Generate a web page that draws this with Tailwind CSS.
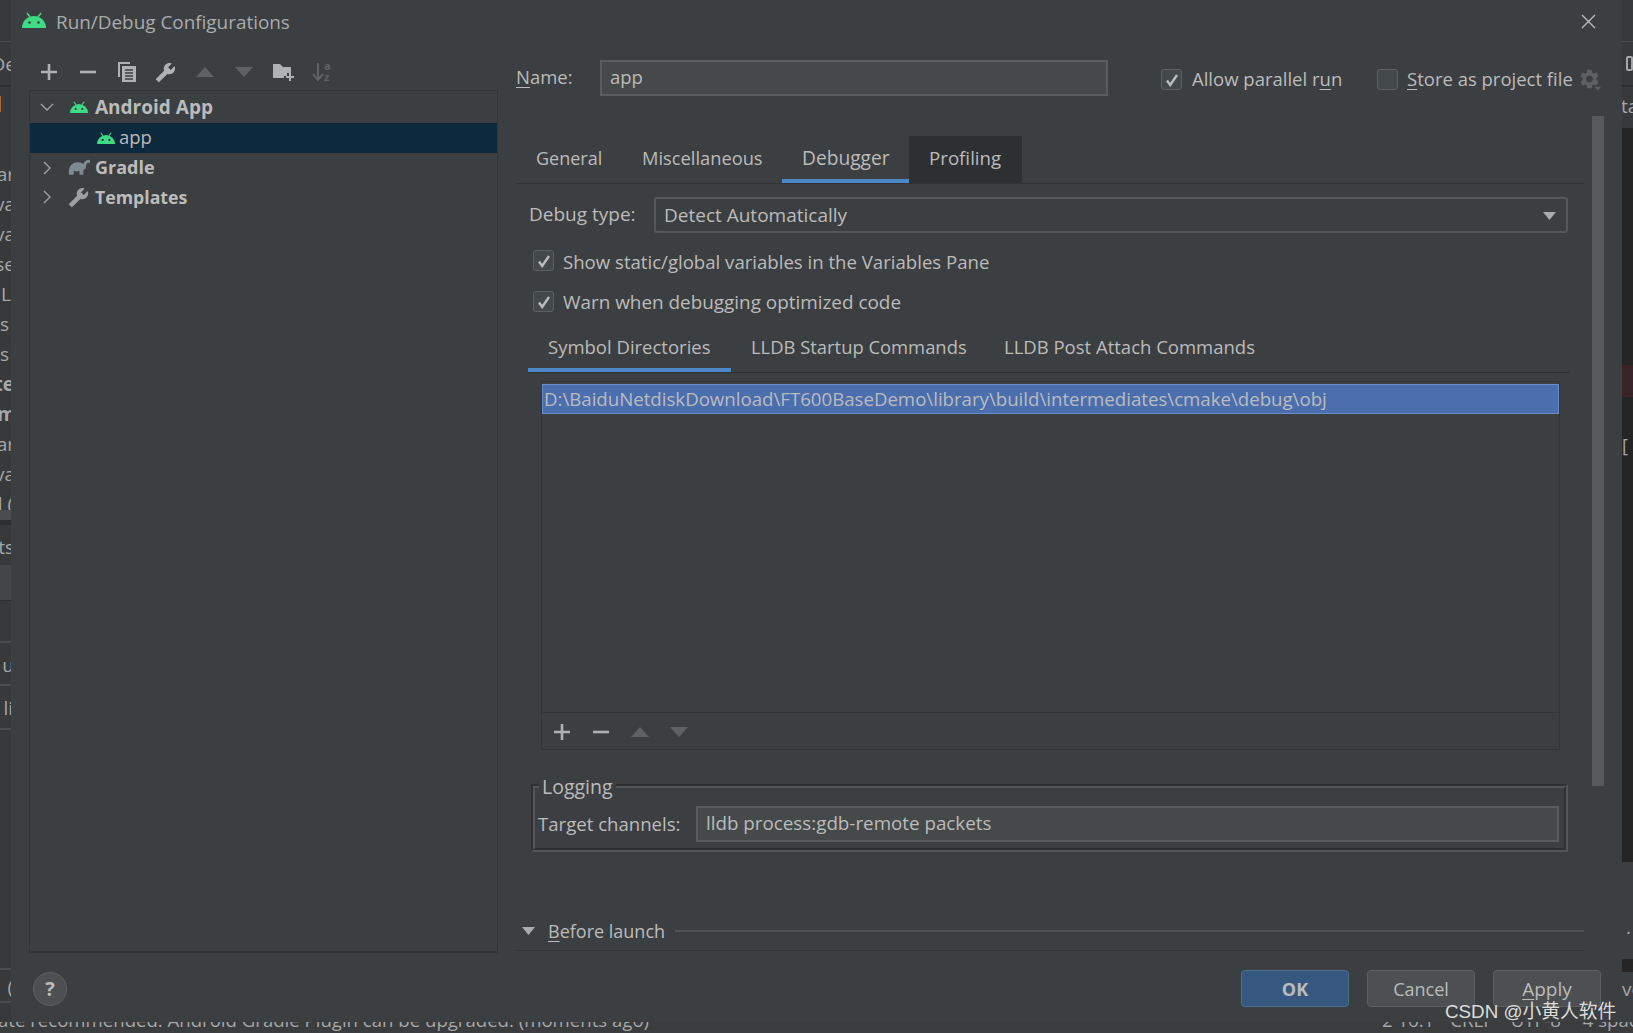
<!DOCTYPE html>
<html lang="en">
<head>
    <meta charset="UTF-8">
    <title>Run/Debug Configurations</title>
    <script src="https://cdn.jsdelivr.net/npm/@tailwindcss/browser@4"></script>
</head>
<body class="relative w-[1633px] h-[1033px] overflow-hidden bg-[#3a3c3e] text-[#bbbbbb] text-[18.5px] font-['Open_Sans',sans-serif]">

<!-- IDE behind the dialog -->
<div class="flex h-[1022px]">
    <div class="w-[11px] overflow-hidden bg-[#37393b] text-[#a5a7a9] flex flex-col items-end leading-[30px] text-[19px] whitespace-nowrap">
        <div class="h-[42px] w-full shrink-0 border-b border-[#4a4c4e]"></div>
        <div class="h-[45px] w-full shrink-0 flex justify-end items-center border-b-2 border-[#2c2e30]"><span class="-mr-[5px]">De</span></div>
        <div class="h-[26px] w-full shrink-0 pt-[9px]"><div class="w-[1px] h-[16px] bg-[#a66a30]"></div></div>
        <div class="h-[46px] shrink-0"></div>
        <div class="h-[30px] shrink-0 -mr-[4px]">ar</div>
        <div class="h-[30px] shrink-0 -mr-[4px]">va</div>
        <div class="h-[30px] shrink-0 -mr-[4px]">va</div>
        <div class="h-[30px] shrink-0 -mr-[4px]">se</div>
        <div class="h-[30px] shrink-0">iL</div>
        <div class="h-[30px] shrink-0 w-full">s</div>
        <div class="h-[30px] shrink-0 w-full">s</div>
        <div class="h-[30px] shrink-0 font-bold -mr-[3px]">te</div>
        <div class="h-[30px] shrink-0 font-bold -mr-[5px]">m</div>
        <div class="h-[30px] shrink-0 -mr-[4px]">ar</div>
        <div class="h-[30px] shrink-0 -mr-[4px]">va</div>
        <div class="h-[21px] shrink-0 -mr-[2px]">l (</div>
        <div class="h-[10px] w-full shrink-0 bg-[#4a4c4e]"></div>
        <div class="h-[5px] w-full shrink-0 bg-[#2c2e30]"></div>
        <div class="h-[40px] shrink-0 leading-[44px] -mr-[3px]">ts</div>
        <div class="h-[36px] w-full shrink-0 bg-[#434547] border-b border-[#2c2e30]"></div>
        <div class="h-[42px] w-full shrink-0 border-b-2 border-[#4a4c4e]"></div>
        <div class="h-[43px] leading-[44px] w-full shrink-0 border-b-2 border-[#4a4c4e] flex justify-end"><span class="-mr-[3px]">u</span></div>
        <div class="h-[44px] leading-[44px] w-full shrink-0 border-b-2 border-[#4a4c4e] flex justify-end"><span class="-mr-[2px]">li</span></div>
        <div class="h-[240px] w-full shrink-0 border-b-2 border-[#4a4c4e]"></div>
        <div class="h-[33px] w-full shrink-0 flex justify-end leading-[34px] border-b-2 border-[#4a4c4e]"><span class="-mr-[2px]">(</span></div>
    </div>
    <div class="flex-1"></div>
    <div class="w-[11px] overflow-hidden bg-[#252525] flex flex-col text-[#a5a7a9]">
        <div class="h-[128px] bg-[#37393b] shrink-0">
            <div class="h-[42px] border-b border-[#4a4c4e]"></div>
            <div class="h-[45px] border-b-2 border-[#2c2e30] pt-[14px] pl-[4px]"><div class="w-[7px] h-[15px] border-2 border-[#a5a7a9] rounded-[2px]"></div></div>
            <div class="leading-[38px] text-[19px] -ml-[1px]">ta</div>
        </div>
        <div class="h-[237px] shrink-0"></div>
        <div class="h-[32px] bg-[#3a2326] shrink-0"></div>
        <div class="h-[38px] shrink-0"></div>
        <div class="h-[20px] text-[18px] leading-[20px] shrink-0">[</div>
        <div class="h-[407px] shrink-0"></div>
        <div class="h-[97px] bg-[#3c3f41] shrink-0 pt-[60px] pl-[4px] leading-[10px]">.</div>
        <div class="h-[13px] bg-[#252525] shrink-0"></div>
        <div class="flex-1 bg-[#3c3f41] leading-[34px] text-[19px]">vo</div>
    </div>
</div>
<div class="h-[11px] overflow-hidden flex justify-between text-[18.6px] leading-[26px] bg-[#3a3c3e] text-[#a5a7a9]">
    <div class="-mt-[15px] whitespace-nowrap -ml-[2px]">ate recommended: Android Gradle Plugin can be upgraded. (moments ago)</div>
    <div class="-mt-[15px] w-[251px] shrink-0 overflow-hidden flex whitespace-nowrap">
        <span class="mr-[16px] shrink-0">2 16:1</span><span class="mr-[18px] shrink-0">CRLF</span><span class="mr-[22px] shrink-0">UTF-8</span><span class="shrink-0">4 spaces</span>
    </div>
</div>

<!-- dialog -->
<div class="absolute left-[11px] top-0 w-[1611px] h-[1022px] bg-[#3c3f41] flex flex-col">
    <div class="h-[42px] shrink-0 flex items-center pl-[11px]">
        <svg class="w-[24px] h-[16px] mb-[3px]" viewBox="0 0 24 16"><path d="M5 1l3 4M19 1l-3 4" stroke="#3ddc84" stroke-width="1.5"/><path d="M0 16A12 12 0 0 1 24 16z" fill="#3ddc84"/><circle cx="7.5" cy="10.5" r="1.3" fill="#3c3f41"/><circle cx="16.5" cy="10.5" r="1.3" fill="#3c3f41"/></svg>
        <span class="ml-[10px] mt-[2px] text-[18.9px] text-[#a9abad]">Run/Debug Configurations</span>
        <svg class="w-[15px] h-[15px] ml-auto mr-[26px]" viewBox="0 0 15 15"><path d="M1 1l13 13M14 1L1 14" stroke="#bbbbbb" stroke-width="1.4"/></svg>
    </div>

    <div class="h-[911px] shrink-0 flex">
        <!-- left column -->
        <div class="w-[469px] ml-[18px] flex flex-col">
            <div class="h-[48px] shrink-0 flex items-center pt-[12px]">
                <div class="w-[39px] flex justify-center"><svg class="w-[16px] h-[16px]" viewBox="0 0 16 16"><path d="M8 0v16M0 8h16" stroke="#afb1b3" stroke-width="2.6"/></svg></div>
                <div class="w-[39px] flex justify-center"><svg class="w-[16px] h-[16px]" viewBox="0 0 16 16"><path d="M0 8h16" stroke="#afb1b3" stroke-width="2.6"/></svg></div>
                <div class="w-[39px] flex justify-center"><svg class="w-[18px] h-[20px]" viewBox="0 0 18 20"><path d="M1 15V1h11" fill="none" stroke="#afb1b3" stroke-width="2"/><path d="M4 4h14v16H4z" fill="#afb1b3"/><path d="M7 8h8M7 11h8M7 14h8M7 17h8" stroke="#3c3f41" stroke-width="1.3"/></svg></div>
                <div class="w-[39px] flex justify-center"><svg class="w-[21px] h-[21px]" viewBox="0 0 24 24"><path transform="scale(-1 1) translate(-24 0)" fill="#afb1b3" d="M22.7 19l-9.1-9.1c.9-2.3.4-5-1.5-6.9-2-2-5-2.4-7.4-1.3L9 6 6 9 1.6 4.7C.4 7.1.9 10.1 2.9 12.1c1.9 1.9 4.6 2.4 6.9 1.5l9.1 9.1c.4.4 1 .4 1.4 0l2.3-2.3c.5-.4.5-1.1.1-1.4z"/></svg></div>
                <div class="w-[39px] flex justify-center"><svg class="w-[18px] h-[10px]" viewBox="0 0 18 10"><path d="M9 0l9 10H0z" fill="#5f6163"/></svg></div>
                <div class="w-[39px] flex justify-center"><svg class="w-[18px] h-[10px]" viewBox="0 0 18 10"><path d="M0 0h18L9 10z" fill="#5f6163"/></svg></div>
                <div class="w-[39px] flex justify-center pl-[2px]"><svg class="w-[21px] h-[18px]" viewBox="0 0 21 18"><path d="M0 1h7l3 3h8v6h-4v3h-3v2H0z" fill="#afb1b3"/><path d="M17 10v8M13 14h8" stroke="#afb1b3" stroke-width="2"/></svg></div>
                <div class="w-[39px] flex justify-center"><svg class="w-[20px] h-[20px]" viewBox="0 0 20 20"><path d="M6 1v16M1 12l5 6 5-6" fill="none" stroke="#5f6163" stroke-width="2"/><text x="12" y="8" font-size="11" font-weight="700" font-family="Open Sans" fill="#5f6163">a</text><text x="12" y="19" font-size="11" font-weight="700" font-family="Open Sans" fill="#5f6163">z</text></svg></div>
            </div>
            <div class="h-[863px] shrink-0 border border-b-2 border-[#333537]">
                <div class="h-[32px] flex items-center font-bold text-[19px]">
                    <div class="w-[40px] flex justify-center pr-[6px]"><svg class="w-[14px] h-[8px]" viewBox="0 0 14 8"><path d="M1 1l6 6 6-6" fill="none" stroke="#9da0a2" stroke-width="1.4"/></svg></div>
                    <svg class="w-[18px] h-[12px]" viewBox="0 0 24 16"><path d="M5 1l3 4M19 1l-3 4" stroke="#3ddc84" stroke-width="1.5"/><path d="M0 16A12 12 0 0 1 24 16z" fill="#3ddc84"/><circle cx="7.5" cy="10.5" r="1.4" fill="#3c3f41"/><circle cx="16.5" cy="10.5" r="1.4" fill="#3c3f41"/></svg>
                    <span class="ml-[7px]">Android App</span>
                </div>
                <div class="h-[30px] flex items-center bg-[#0d293e]">
                    <svg class="w-[18px] h-[12px] ml-[67px]" viewBox="0 0 24 16"><path d="M5 1l3 4M19 1l-3 4" stroke="#3ddc84" stroke-width="1.5"/><path d="M0 16A12 12 0 0 1 24 16z" fill="#3ddc84"/><circle cx="7.5" cy="10.5" r="1.4" fill="#0d293e"/><circle cx="16.5" cy="10.5" r="1.4" fill="#0d293e"/></svg>
                    <span class="ml-[4px] -mt-[2px]">app</span>
                </div>
                <div class="h-[29px] flex items-center font-bold text-[18px]">
                    <div class="w-[40px] flex justify-center pr-[6px]"><svg class="w-[8px] h-[14px]" viewBox="0 0 8 14"><path d="M1 1l6 6-6 6" fill="none" stroke="#9da0a2" stroke-width="1.4"/></svg></div>
                    <svg class="w-[23px] h-[17px] -ml-[2px] -mt-[2px]" viewBox="0 0 24 17"><path fill="#7f8b91" d="M1 17C0 9 4 4 10 4c3 0 5 1 6 2 1-3 4-6 7-4v3c-2-1-4 0-4 3 0 3-2 4-3 4v5h-4v-4c-2 1-4 1-6 0v4z"/></svg>
                    <span class="ml-[4px]">Gradle</span>
                </div>
                <div class="h-[30px] flex items-center font-bold text-[17.7px]">
                    <div class="w-[40px] flex justify-center pr-[6px]"><svg class="w-[8px] h-[14px]" viewBox="0 0 8 14"><path d="M1 1l6 6-6 6" fill="none" stroke="#9da0a2" stroke-width="1.4"/></svg></div>
                    <svg class="w-[21px] h-[21px] -ml-[2px]" viewBox="0 0 24 24"><path transform="scale(-1 1) translate(-24 0)" fill="#9da0a2" d="M22.7 19l-9.1-9.1c.9-2.3.4-5-1.5-6.9-2-2-5-2.4-7.4-1.3L9 6 6 9 1.6 4.7C.4 7.1.9 10.1 2.9 12.1c1.9 1.9 4.6 2.4 6.9 1.5l9.1 9.1c.4.4 1 .4 1.4 0l2.3-2.3c.5-.4.5-1.1.1-1.4z"/></svg>
                    <span class="ml-[6px]">Templates</span>
                </div>
            </div>
        </div>

        <!-- right column -->
        <div class="relative ml-[18px] w-[1068px] flex flex-col">
            <div class="h-[36px] mt-[18px] shrink-0 flex items-center">
                <span class="w-[84px] -mt-[2px]"><u class="underline-offset-[3px]">N</u>ame:</span>
                <div class="w-[508px] h-[36px] bg-[#45494a] border-2 border-[#5a5c5d] flex items-center pl-[8px] pb-[2px]">app</div>
                <div class="ml-[53px] mt-[3px] w-[21px] h-[21px] rounded-[3px] border border-[#5e6060] bg-[#43494a] flex items-center justify-center"><svg class="w-[14px] h-[14px]" viewBox="0 0 14 14"><path d="M2 7.5l3.2 4.5L12 2" fill="none" stroke="#bbbbbb" stroke-width="2.4"/></svg></div>
                <span class="ml-[10px] mt-[1px] w-[185px] whitespace-nowrap">Allow parallel r<u class="underline-offset-[3px]">u</u>n</span>
                <div class="mt-[3px] w-[21px] h-[21px] shrink-0 rounded-[3px] border border-[#5e6060] bg-[#43494a]"></div>
                <span class="ml-[9px] mt-[1px] whitespace-nowrap"><u class="underline-offset-[3px]">S</u>tore as project file</span>
            </div>
            <!-- tabs -->
            <div class="mt-[40px] h-[48px] shrink-0 flex border-b border-[#323232]">
                <div class="w-[106px] pl-[20px] leading-[44px] text-[18px]">General</div>
                <div class="w-[160px] pl-[20px] leading-[44px] text-[18.3px]">Miscellaneous</div>
                <div class="w-[127px] pl-[20px] leading-[44px] text-[19.2px] border-b-4 border-[#4a88c7]">Debugger</div>
                <div class="w-[113px] pl-[20px] leading-[44px] text-[18.7px] bg-[#2d3032]">Profiling</div>
            </div>
            <div class="mt-[13px] h-[35px] shrink-0 flex items-center pl-[13px] text-[19px]">
                <span class="w-[125px]">Debug type:</span>
                <div class="relative w-[914px] h-[36px] rounded-[3px] border-2 border-[#555759] flex items-center pl-[8px] pt-[2px]">Detect Automatically
                    <svg class="absolute right-[10px] top-[13px] w-[13px] h-[8px]" viewBox="0 0 13 8"><path d="M0 0h13L6.5 8z" fill="#a9abad"/></svg>
                </div>
            </div>
            <div class="mt-[18px] h-[21px] shrink-0 flex items-center pl-[17px]">
                <div class="w-[21px] h-[21px] rounded-[3px] border border-[#5e6060] bg-[#43494a] flex items-center justify-center"><svg class="w-[14px] h-[14px]" viewBox="0 0 14 14"><path d="M2 7.5l3.2 4.5L12 2" fill="none" stroke="#bbbbbb" stroke-width="2.4"/></svg></div>
                <span class="ml-[9px] mt-[2px] text-[18.6px]">Show static/global variables in the Variables Pane</span>
            </div>
            <div class="mt-[20px] h-[21px] shrink-0 flex items-center pl-[17px]">
                <div class="w-[21px] h-[21px] rounded-[3px] border border-[#5e6060] bg-[#43494a] flex items-center justify-center"><svg class="w-[14px] h-[14px]" viewBox="0 0 14 14"><path d="M2 7.5l3.2 4.5L12 2" fill="none" stroke="#bbbbbb" stroke-width="2.4"/></svg></div>
                <span class="ml-[9px] mt-[2px] text-[18.9px]">Warn when debugging optimized code</span>
            </div>
            <!-- symbol tabs -->
            <div class="mt-[14px] ml-[12px] w-[1042px] h-[47px] shrink-0 flex border-b border-[#323232]">
                <div class="w-[203px] pl-[20px] leading-[42px] border-b-4 border-[#4a88c7]">Symbol Directories</div>
                <div class="w-[253px] pl-[20px] leading-[42px] text-[18.4px]">LLDB Startup Commands</div>
                <div class="pl-[20px] leading-[42px]">LLDB Post Attach Commands</div>
            </div>
            <div class="mt-[8px] ml-[25px] w-[1019px] h-[369px] shrink-0 border border-[#333537] flex flex-col">
                <div class="mt-[2px] h-[30px] shrink-0 bg-[#4b6eaf] border border-[#6a8cc8] pl-[1px] leading-[28px] whitespace-nowrap text-[18.65px]">D:\BaiduNetdiskDownload\FT600BaseDemo\library\build\intermediates\cmake\debug\obj</div>
                <div class="flex-1"></div>
                <div class="h-[37px] shrink-0 border-t border-[#333537] flex items-center pt-[2px]">
                    <div class="w-[39px] flex justify-center"><svg class="w-[16px] h-[16px]" viewBox="0 0 16 16"><path d="M8 0v16M0 8h16" stroke="#afb1b3" stroke-width="2.6"/></svg></div>
                    <div class="w-[39px] flex justify-center"><svg class="w-[16px] h-[16px]" viewBox="0 0 16 16"><path d="M0 8h16" stroke="#afb1b3" stroke-width="2.6"/></svg></div>
                    <div class="w-[39px] flex justify-center"><svg class="w-[18px] h-[10px]" viewBox="0 0 18 10"><path d="M9 0l9 10H0z" fill="#5f6163"/></svg></div>
                    <div class="w-[39px] flex justify-center"><svg class="w-[18px] h-[10px]" viewBox="0 0 18 10"><path d="M0 0h18L9 10z" fill="#5f6163"/></svg></div>
                </div>
            </div>
            <!-- logging group -->
            <div class="relative mt-[34px] ml-[15px] w-[1037px] h-[68px] shrink-0 border-2 border-t-[#2e3032] border-l-[#2e3032] border-r-[#54575a] border-b-[#54575a]">
                <div class="h-full border-2 border-t-[#54575a] border-l-[#54575a] border-r-[#2e3032] border-b-[#2e3032] flex items-center pl-[3px] pt-[11px]">
                    <span class="w-[158px] text-[18.6px]">Target channels:</span>
                    <div class="w-[863px] h-[36px] bg-[#45494a] border-2 border-[#5a5c5d] flex items-center pl-[8px] text-[18.8px]">lldb process:gdb-remote packets</div>
                </div>
                <span class="absolute left-[6px] -top-[14px] bg-[#3c3f41] px-[3px] leading-[30px] text-[19.5px]">Logging</span>
            </div>
            <div class="mt-[64px] h-[30px] shrink-0 flex items-center pl-[6px] text-[18px]">
                <svg class="w-[13px] h-[8px]" viewBox="0 0 13 8"><path d="M0 0h13L6.5 8z" fill="#a9abad"/></svg>
                <span class="ml-[13px] whitespace-nowrap"><u class="underline-offset-[3px]">B</u>efore launch</span>
                <div class="flex-1 ml-[10px] h-[2px] bg-[#505254]"></div>
            </div>
            <div class="mt-[4px] h-[1px] shrink-0 bg-[#333537]"></div>
            <!-- scrollbar and gear sit over the column -->
            <div class="absolute left-[1076px] top-[74px] w-[12px] h-[670px] bg-[#58595a]"></div>
            <svg class="absolute left-[1062px] top-[25px] w-[23px] h-[24px]" viewBox="0 0 24 24"><path fill="#5e6163" d="M19.14 12.94c.04-.3.06-.61.06-.94 0-.32-.02-.64-.07-.94l2.03-1.58c.18-.14.23-.41.12-.61l-1.92-3.32c-.12-.22-.37-.29-.59-.22l-2.39.96c-.5-.38-1.03-.7-1.62-.94l-.36-2.54c-.04-.24-.24-.41-.48-.41h-3.84c-.24 0-.43.17-.47.41l-.36 2.54c-.59.24-1.13.57-1.62.94l-2.39-.96c-.22-.08-.47 0-.59.22L2.74 8.87c-.12.21-.08.47.12.61l2.03 1.58c-.05.3-.09.63-.09.94s.02.64.07.94l-2.03 1.58c-.18.14-.23.41-.12.61l1.92 3.32c.12.22.37.29.59.22l2.39-.96c.5.38 1.03.7 1.62.94l.36 2.54c.05.24.24.41.48.41h3.84c.24 0 .44-.17.47-.41l.36-2.54c.59-.24 1.13-.56 1.62-.94l2.39.96c.22.08.47 0 .59-.22l1.92-3.32c.12-.22.07-.47-.12-.61l-2.01-1.58zM12 15.6c-1.98 0-3.6-1.62-3.6-3.6s1.62-3.6 3.6-3.6 3.6 1.62 3.6 3.6-1.62 3.6-3.6 3.6z"/><path d="M17 20h7l-3.5 4z" fill="#5e6163"/></svg>
        </div>
    </div>

    <!-- footer -->
    <div class="flex-1 flex items-start pt-[17px] pl-[22px] pr-[21px] text-[18px]">
        <div class="mt-[2px] w-[34px] h-[34px] rounded-full bg-[#4c5052] border border-[#5e6060] flex items-center justify-center font-bold text-[20px] text-[#bbbbbb]">?</div>
        <div class="ml-auto w-[108px] h-[37px] rounded-[4px] bg-[#365880] border border-[#4c708c] flex items-center justify-center font-bold pt-[2px]">OK</div>
        <div class="ml-[18px] w-[108px] h-[37px] rounded-[4px] bg-[#4c5052] border border-[#5e6060] flex items-center justify-center pt-[2px]">Cancel</div>
        <div class="ml-[18px] w-[108px] h-[37px] rounded-[4px] bg-[#4c5052] border border-[#5e6060] flex items-center justify-center text-[19px] pt-[2px]"><span><u class="underline-offset-[3px]">A</u>pply</span></div>
    </div>
</div>

<!-- watermark over the corner of the shot -->
<div class="absolute left-[1445px] top-[1000px] whitespace-nowrap text-[18.8px] leading-[24px] text-[#dcdcdc] font-['Liberation_Sans','Noto_Sans_CJK_SC',sans-serif]">CSDN @小黄人软件</div>
</body>
</html>
